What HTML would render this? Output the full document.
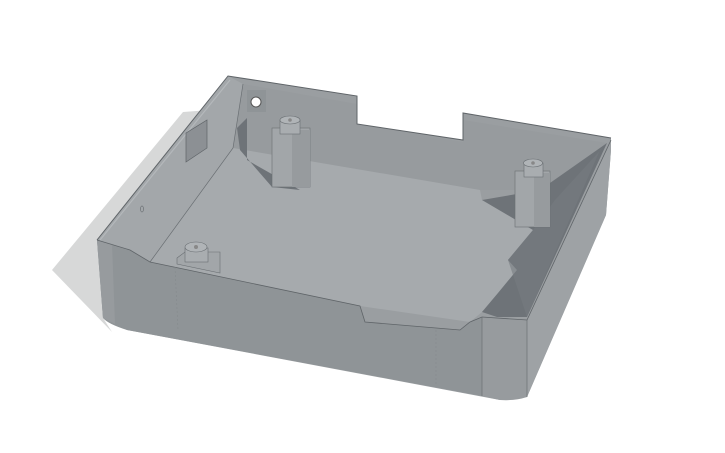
<!DOCTYPE html>
<html><head><style>
html,body{margin:0;padding:0;background:#fff;}
svg{display:block;}
</style></head><body>
<svg width="725" height="453" viewBox="0 0 725 453" xmlns="http://www.w3.org/2000/svg">
<rect width="725" height="453" fill="#fff"/>
<polygon points="183,112 210,110 97,240 103,318 112,332 52,270" fill="#d7d8d8"/>
<polygon points="228,76 357,96 357,124 463,140 463,113 611,138 611,150 606,215 527,397 500,400 127,330 103,318 97,240" fill="#9a9ea1"/>
<polygon points="228,76 243,84 233,148 150,262 130,250 97,240" fill="#a3a7aa"/>
<polyline points="100,240 230,80" fill="none" stroke="#b4b8bb" stroke-width="1.2"/>
<polygon points="243,84 357,104 357,124 463,142 463,120 607,143 540,190 480,190 233,148" fill="#979b9e"/>
<polygon points="233,148 480,190 482,200 533,230 508,260 517,270 498,293 482,312 470,322 360,306 150,262" fill="#a6aaad"/>
<polygon points="607,143 540,190 482,200 533,230 508,260 517,270 498,293 482,312 497,317 527,317" fill="#6e7378"/>
<polygon points="607,143 555,200 533,230 508,260 527,317 600,150" fill="#777c80" opacity="0.6"/>
<path d="M97,240 L130,250 L150,262 L360,306 L365,322 L460,330 L470,322 L482,317 L482,396 L127,330 Q108,324 103,318 Z" fill="#8f9497"/>
<polygon points="97,240 112,244 115,324 103,318" fill="#979b9e"/>
<path d="M482,317 L527,320 L527,397 Q515,401 500,400 L482,396 Z" fill="#979b9e"/>
<polygon points="527,320 611,140 611,150 606,215 527,397" fill="#9ea2a5"/>
<polyline points="97,240 228,76 357,96 357,124 463,140 463,113 611,138" fill="none" stroke="#5f6468" stroke-width="1"/>
<polyline points="150,262 233,148 243,84" fill="none" stroke="#6a6f73" stroke-width="0.7"/>
<polyline points="97,240 130,250 150,262 360,306 365,322 460,330 470,322 482,317 527,320 611,140" fill="none" stroke="#5f6468" stroke-width="0.8"/>
<line x1="482" y1="317" x2="482" y2="396" stroke="#6a6f73" stroke-width="0.7"/>
<line x1="527" y1="320" x2="527" y2="397" stroke="#6a6f73" stroke-width="0.7"/>
<line x1="175" y1="267" x2="178" y2="330" stroke="#858a8d" stroke-width="0.6" stroke-dasharray="2,2"/>
<line x1="436" y1="330" x2="436" y2="385" stroke="#858a8d" stroke-width="0.6" stroke-dasharray="2,2"/>
<polygon points="186,133 207,120 207,148 186,162" fill="#8c9094" stroke="#5f6468" stroke-width="0.7"/>
<ellipse cx="142" cy="209" rx="1.5" ry="3" fill="none" stroke="#6a6f73" stroke-width="0.7"/>
<rect x="247" y="90" width="19" height="22" fill="#8f9497"/>
<circle cx="256" cy="102" r="5" fill="#fff" stroke="#555" stroke-width="1"/>
<polygon points="237,128 247,118 247,160 300,190 272,187 240,150" fill="#6e7378"/>
<rect x="272" y="128" width="38" height="59" fill="#a2a6a9" stroke="#6a6f73" stroke-width="0.6"/>
<rect x="292" y="130" width="18" height="57" fill="#979b9e"/>
<rect x="280" y="120" width="20" height="14" fill="#a9adb0" stroke="#6a6f73" stroke-width="0.6"/>
<ellipse cx="290" cy="120" rx="10" ry="4" fill="#b0b4b7" stroke="#6a6f73" stroke-width="0.6"/>
<circle cx="290" cy="120" r="1.8" fill="#888"/>
<rect x="515" y="171" width="35" height="56" fill="#a2a6a9" stroke="#6a6f73" stroke-width="0.6"/>
<rect x="534" y="173" width="16" height="54" fill="#979b9e"/>
<rect x="524" y="163" width="19" height="14" fill="#a9adb0" stroke="#6a6f73" stroke-width="0.6"/>
<ellipse cx="533" cy="163" rx="9.5" ry="4" fill="#b0b4b7" stroke="#6a6f73" stroke-width="0.6"/>
<circle cx="533" cy="163" r="1.8" fill="#888"/>
<polygon points="177,258 185,252 220,252 220,273 177,264" fill="#a2a6a9" stroke="#6a6f73" stroke-width="0.6"/>
<rect x="185" y="248" width="23" height="14" fill="#a9adb0" stroke="#6a6f73" stroke-width="0.6"/>
<ellipse cx="196" cy="247" rx="11" ry="5" fill="#b0b4b7" stroke="#6a6f73" stroke-width="0.6"/>
<circle cx="196" cy="247" r="2" fill="#888"/>
</svg>
</body></html>
